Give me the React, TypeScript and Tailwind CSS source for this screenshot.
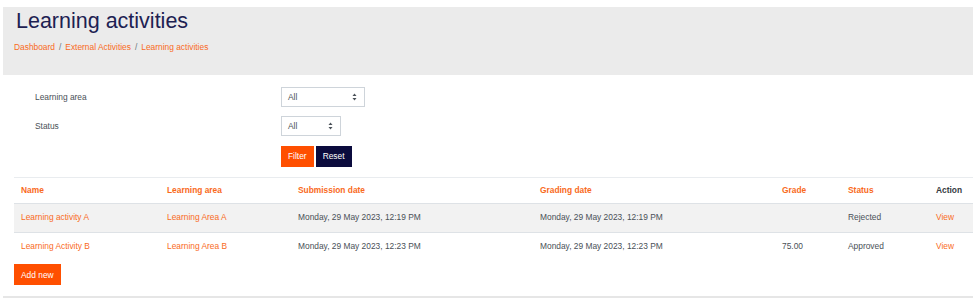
import React from 'react'

const rows = [
  {
    name: 'Learning activity A',
    area: 'Learning Area A',
    submitted: 'Monday, 29 May 2023, 12:19 PM',
    graded: 'Monday, 29 May 2023, 12:19 PM',
    grade: '',
    status: 'Rejected',
  },
  {
    name: 'Learning Activity B',
    area: 'Learning Area B',
    submitted: 'Monday, 29 May 2023, 12:23 PM',
    graded: 'Monday, 29 May 2023, 12:23 PM',
    grade: '75.00',
    status: 'Approved',
  },
]

function Caret() {
  return (
    <svg width="5" height="8" viewBox="0 0 5 8" className="text-[#495057]">
      <path d="M2.5 0.5 L4.5 3 H0.5 Z" fill="currentColor" />
      <path d="M2.5 7.5 L4.5 5 H0.5 Z" fill="currentColor" />
    </svg>
  )
}

function Select({ width }: { width: string }) {
  return (
    <div
      className={`${width} h-[20px] border border-[#ced4da] bg-white flex items-center justify-between pl-[6px] pr-[7px] text-[8.4px] text-[#495057]`}
    >
      <span>All</span>
      <Caret />
    </div>
  )
}

export default function App() {
  return (
    <div className="w-[980px] h-[305px] bg-white pt-[7px] pl-[3px] pr-[7px] font-['Liberation_Sans',Arial,sans-serif] text-[#495057]">
      {/* Page header */}
      <header className="h-[68px] bg-[#ebebeb] pl-[11px] pt-[1px]">
        <h1 className="pl-[2px] text-[21.5px] leading-[26px] text-[#1d2152]">Learning activities</h1>
        <nav className="mt-[7px] flex items-center gap-[4px] text-[8.4px] text-[#f96a1c]">
          <span>Dashboard</span>
          <span className="text-[#6a737b]">/</span>
          <span>External Activities</span>
          <span className="text-[#6a737b]">/</span>
          <span>Learning activities</span>
        </nav>
      </header>

      <div className="pl-[11px]">
        {/* Filters */}
        <div className="pt-[12px] pl-[21px] text-[8.4px]">
          <div className="flex items-center h-[20px]">
            <span className="w-[246px]">Learning area</span>
            <Select width="w-[84px]" />
          </div>
          <div className="flex items-center h-[20px] mt-[9px]">
            <span className="w-[246px]">Status</span>
            <Select width="w-[60px]" />
          </div>
          <div className="flex items-center h-[21px] mt-[10px] pl-[246px] gap-[2px]">
            <button className="h-[21px] px-[7px] bg-[#ff4f00] text-white">Filter</button>
            <button className="h-[21px] px-[7px] bg-[#0b0b3d] text-white">Reset</button>
          </div>
        </div>

        {/* Table */}
        <table className="mt-[10px] w-full table-fixed border-t border-[#e9ecef] text-[8.4px] text-left">
          <colgroup>
            <col className="w-[146px]" />
            <col className="w-[131px]" />
            <col className="w-[242px]" />
            <col className="w-[242px]" />
            <col className="w-[66px]" />
            <col className="w-[88px]" />
            <col />
          </colgroup>
          <thead>
            <tr className="h-[26px] font-bold text-[#f96a1c]">
              <th className="pl-[7px]">Name</th>
              <th className="pl-[7px]">Learning area</th>
              <th className="pl-[7px]">Submission date</th>
              <th className="pl-[7px]">Grading date</th>
              <th className="pl-[7px]">Grade</th>
              <th className="pl-[7px]">Status</th>
              <th className="pl-[7px] text-[#343a40]">Action</th>
            </tr>
          </thead>
          <tbody>
            {rows.map((r, i) => (
              <tr
                key={r.name}
                className={`h-[28.5px] border-t border-[#dee2e6] ${i === 0 ? 'bg-[#f2f2f2]' : ''}`}
              >
                <td className="pl-[7px] text-[#f96a1c]">{r.name}</td>
                <td className="pl-[7px] text-[#f96a1c]">{r.area}</td>
                <td className="pl-[7px]">{r.submitted}</td>
                <td className="pl-[7px]">{r.graded}</td>
                <td className="pl-[7px]">{r.grade}</td>
                <td className="pl-[7px]">{r.status}</td>
                <td className="pl-[7px] text-[#f96a1c]">View</td>
              </tr>
            ))}
          </tbody>
        </table>

        <button className="mt-[3px] h-[21px] px-[7px] bg-[#ff4f00] text-white text-[8.4px]">Add new</button>
      </div>

      <div className="mt-[11px] border-b-2 border-[#e6e6e6]" />
    </div>
  )
}
